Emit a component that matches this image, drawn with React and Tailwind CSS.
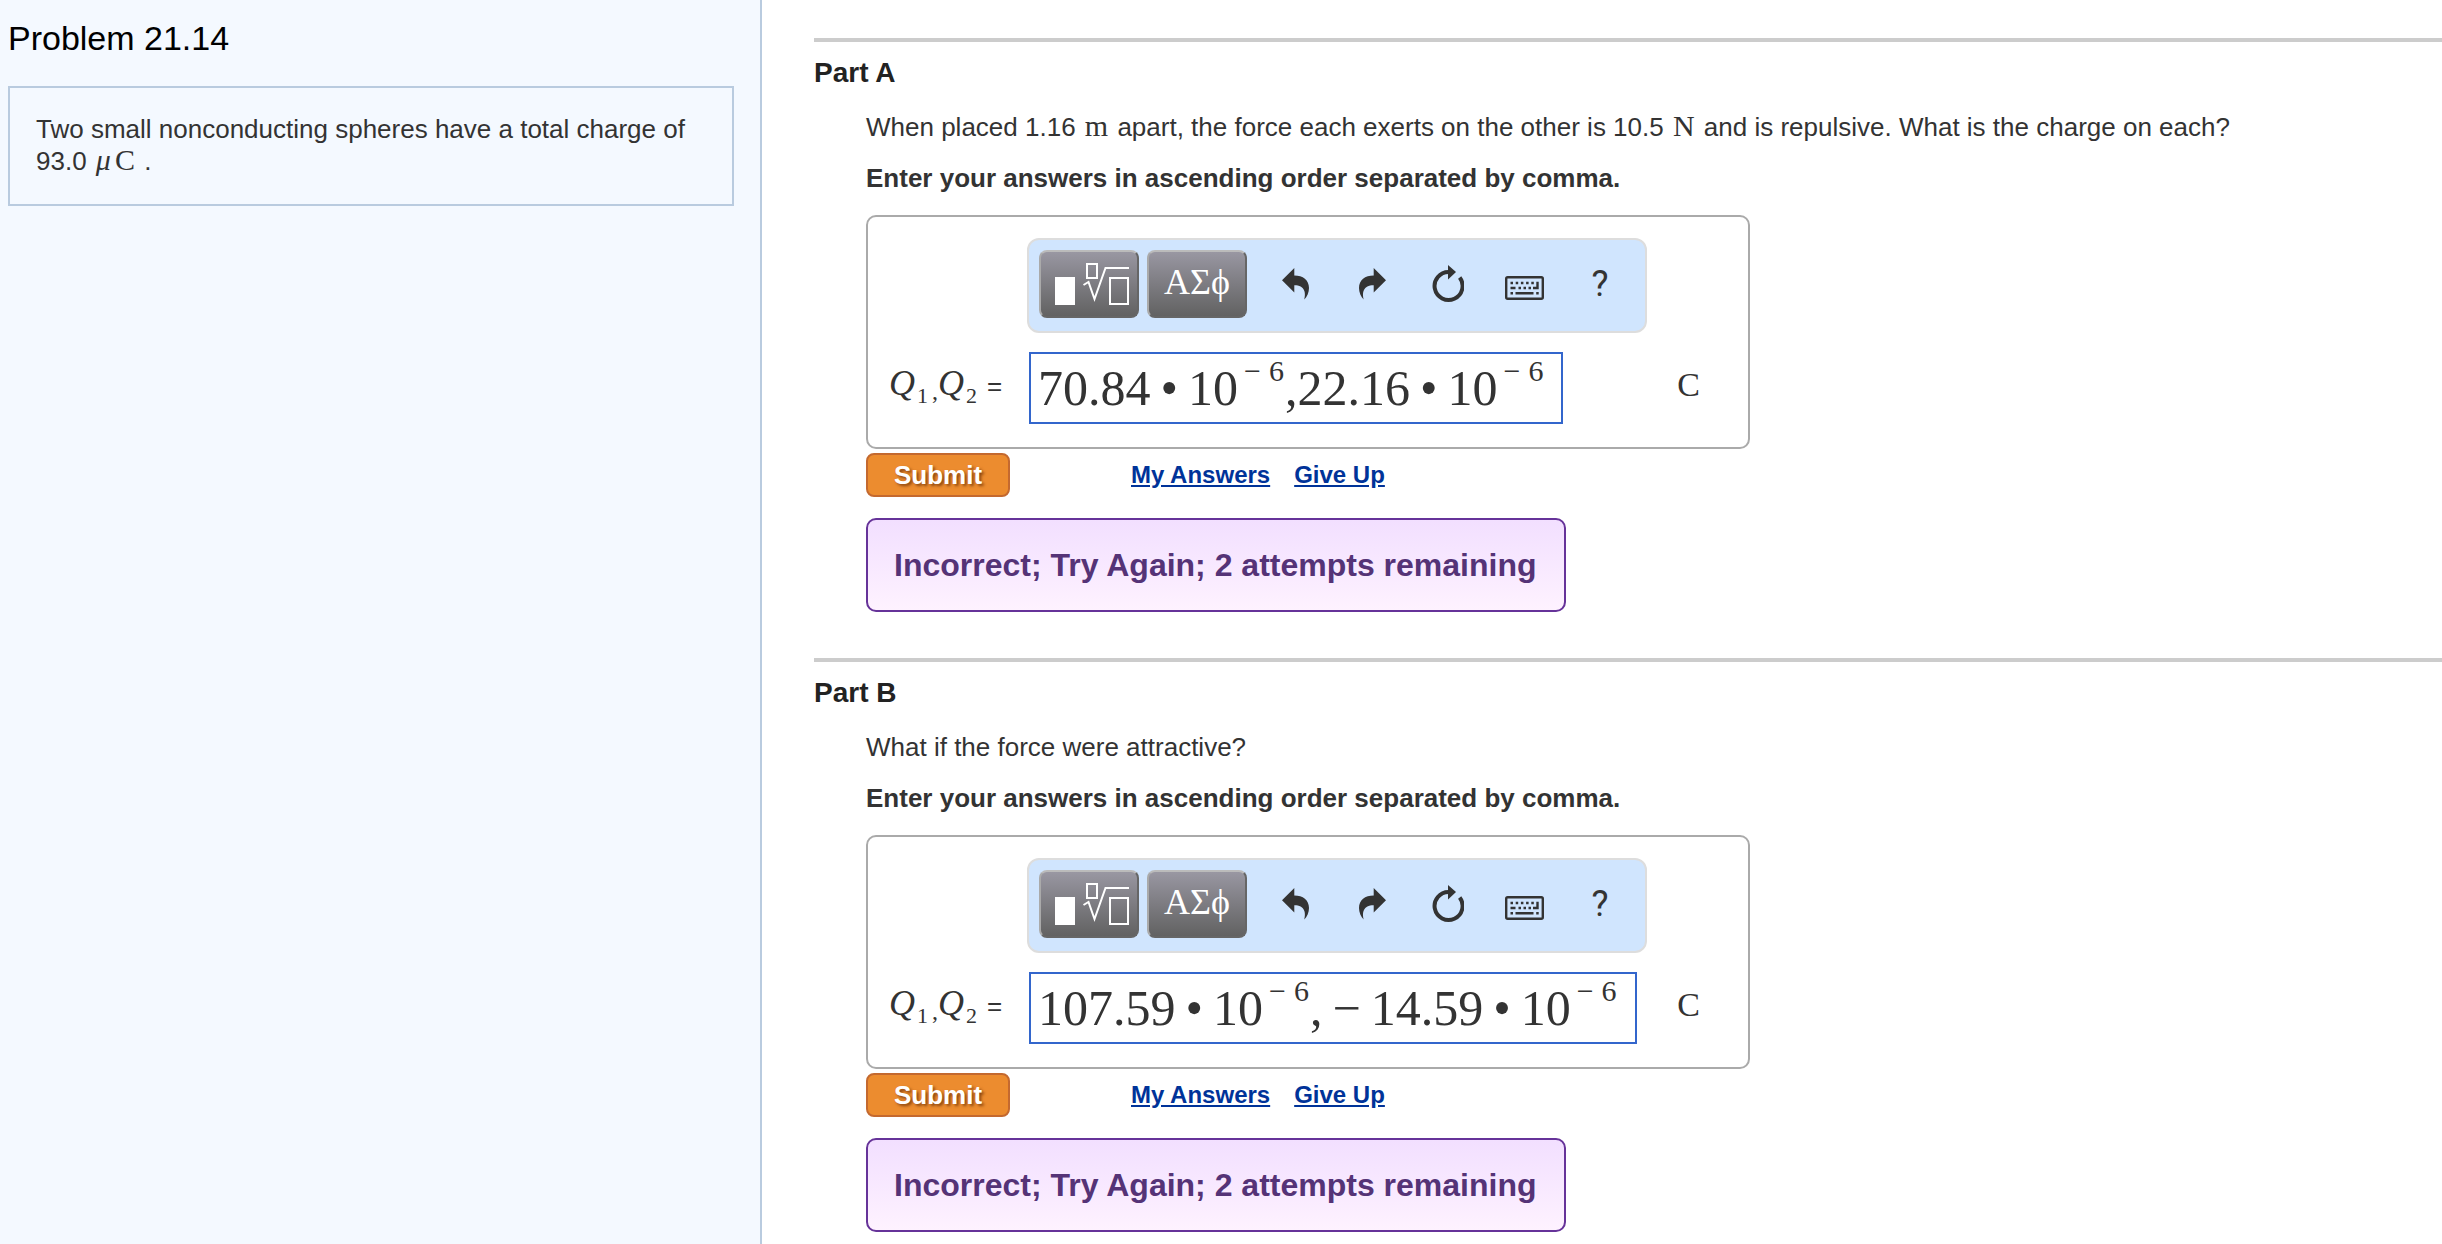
const serif = "font-['Liberation_Serif',serif]";

function Pow({ children }) {
  return (
    <sup className="relative -top-6 ml-[6px] mr-px flex gap-2 text-[30px] leading-none">
      <span>−</span>
      <span>{children}</span>
    </sup>
  );
}

function Dot() {
  return <span className="px-[10px]">•</span>;
}

function Unit({ children }) {
  return <span className={`${serif} mx-[2px] text-[30px] leading-none`}>{children}</span>;
}

function IconTemplates() {
  return (
    <svg width="76" height="44" viewBox="0 0 76 44" fill="none" stroke="#fff" strokeWidth="2">
      <rect x="1" y="15" width="20" height="28" fill="#fff" stroke="none" />
      <rect x="33" y="2" width="10" height="14" />
      <path d="M29.500 23l5 -3 6 17 11 -31h23.500" />
      <rect x="56" y="16" width="18" height="26" />
    </svg>
  );
}

function IconUndo({ flip }) {
  return (
    <svg width="28" height="32" viewBox="0 0 28 32" fill="#333" className={flip ? '-scale-x-100' : ''}>
      <path d="M0 12.300L12.300 0V7.500C21 7.500 27 12 27 20C27 24.500 25 29 22.300 31.500C24 25 23 17.300 12.300 17.300V24.500Z" />
    </svg>
  );
}

function IconReset() {
  return (
    <svg width="32" height="38" viewBox="0 0 32 38">
      <path d="M17 7A14 14 0 1 0 27.700 12.500" fill="none" stroke="#333" strokeWidth="4" />
      <path d="M16 0L24 7L16 14.500Z" fill="#333" />
    </svg>
  );
}

function IconKeyboard() {
  return (
    <svg width="39" height="24" viewBox="0 0 39 24">
      <rect x="1.200" y="1.200" width="36.600" height="21.600" rx="1.500" fill="none" stroke="#333" strokeWidth="2.400" />
      <g fill="none" stroke="#333" strokeWidth="2.400">
        <path d="M5.500 7h2.500M10.700 7h2.500M15.900 7h2.500M21.100 7h2.500M26.300 7h2.500" />
        <path d="M32.500 5.800v6.200h-4.500" />
        <path d="M5.500 12h5M13.500 12h2.500M18.500 12h2.500M23.500 12h2.500" />
        <path d="M5.500 17.200h2.500M10.500 17.200h18M31.200 17.200h2.500" />
      </g>
    </svg>
  );
}

const darkButton =
  'flex h-[68px] w-[100px] shrink-0 items-center justify-center rounded-lg border-2 border-t-[#bbb] border-l-[#aaa] border-r-[#666] border-b-[#666] bg-linear-to-b from-[#9997a2] to-[#626262] text-white';
const iconButton = 'flex h-[68px] w-[76px] shrink-0 items-center justify-center text-[#333]';

function Toolbar() {
  return (
    <div role="toolbar" className="flex h-[95px] w-[620px] items-start rounded-xl border-2 border-[#ddd] bg-[#d0e5fe] px-[10px] pt-[10px]">
      <button type="button" aria-label="Templates" className={`${darkButton} pl-[6px]`}>
        <IconTemplates />
      </button>
      <button type="button" aria-label="Symbols" className={`${darkButton} ${serif} ml-2 text-4xl`}>
        <span className="pb-1">ΑΣϕ</span>
      </button>
      <div className="ml-[11px] flex">
        <button type="button" aria-label="Undo" className={iconButton}><IconUndo /></button>
        <button type="button" aria-label="Redo" className={iconButton}><IconUndo flip /></button>
        <button type="button" aria-label="Reset" className={iconButton}><IconReset /></button>
        <button type="button" aria-label="Keyboard shortcuts" className={`${iconButton} pt-2`}><IconKeyboard /></button>
        <button type="button" aria-label="Help" className={`${iconButton} font-[Roboto,sans-serif] text-4xl`}>?</button>
      </div>
    </div>
  );
}

function Part({ title, question, answer, answerWidth }) {
  const labelId = `${title.replace(' ', '-').toLowerCase()}-label`;

  return (
    <section className="border-t-4 border-[#ccc] pb-[46px] last:pb-3">
      <h2 className="mt-[15px] text-[28px] leading-8 font-bold text-[#222]">{title}</h2>
      <div className="ml-[52px]">
        <p className="mt-[22px] leading-8">{question}</p>
        <p className="mt-[19px] leading-8 font-bold">Enter your answers in ascending order separated by comma.</p>

        <div className="mt-[21px] w-[884px] rounded-[10px] border-2 border-[#aaa] pt-[21px] pb-[23px]">
          <div className="ml-[159px]">
            <Toolbar />
          </div>
          <div className="mt-[19px] flex h-[72px] items-center">
            <div id={labelId} className={`${serif} flex w-[161px] items-baseline pb-2 pl-[21px] text-4xl leading-none`}>
              <i>Q</i>
              <sub className="relative top-2 bottom-auto ml-[2px] text-[22px]">1</sub>
              <span className="relative top-1 ml-1 text-2xl">,</span>
              <i>Q</i>
              <sub className="relative top-2 bottom-auto ml-[2px] text-[22px]">2</sub>
              <span className="ml-[10px] font-['Liberation_Sans',sans-serif] text-[26px]">=</span>
            </div>
            <div
              role="textbox"
              aria-labelledby={labelId}
              contentEditable
              suppressContentEditableWarning
              className={`${serif} ${answerWidth} flex h-[72px] items-baseline border-2 border-[#36c] bg-white pt-[9px] pl-[7px] text-[50px] leading-none outline-none`}
            >
              {answer}
            </div>
            <span className={`${serif} ml-auto pr-[48px] pb-[6px] text-[34px] leading-none`}>C</span>
          </div>
        </div>

        <div className="mt-1 flex items-center">
          <button type="button" className="h-11 w-36 rounded-lg border-2 border-[#c4692f] bg-[#ec8c2f] text-[26px] leading-none font-bold text-white [text-shadow:2px_2px_3px_#8a4510]">
            Submit
          </button>
          <div className="ml-[121px] flex gap-6 text-2xl font-bold text-[#039]">
            <a href="#answers" className="underline">My Answers</a>
            <a href="#give-up" className="underline">Give Up</a>
          </div>
        </div>

        <div className="mt-[21px] flex h-[94px] w-[700px] items-center rounded-[10px] border-2 border-[#639] bg-linear-to-b from-[#f2dfff] to-[#fef2ff] pl-[26px] text-[32px] font-bold text-[#537]">
          Incorrect; Try Again; 2 attempts remaining
        </div>
      </div>
    </section>
  );
}

export default function App() {
  return (
    <div className="flex min-h-screen bg-white font-['Liberation_Sans',sans-serif] text-[26px] text-[#333]">
      <aside className="w-[762px] shrink-0 border-r-2 border-[#b9cbdf] bg-[#f4f9ff] pr-[26px] pl-2">
        <h1 className="mt-[18px] text-[34px] leading-10 text-black">Problem 21.14</h1>
        <div className="mt-7 border-2 border-[#b9cbdf] px-[26px] pt-[25px] pb-[27px] leading-8">
          Two small nonconducting spheres have a total charge of 93.0 <Unit><i className="pr-1">μ</i>C</Unit> .
        </div>
      </aside>
      <main className="min-w-0 flex-1 pt-[38px] pl-[52px]">
        <Part
          title="Part A"
          question={<>When placed 1.16 <Unit>m</Unit> apart, the force each exerts on the other is 10.5 <Unit>N</Unit> and is repulsive. What is the charge on each?</>}
          answer={<>70.84<Dot />10<Pow>6</Pow>,22.16<Dot />10<Pow>6</Pow></>}
          answerWidth="w-[534px]"
        />
        <Part
          title="Part B"
          question="What if the force were attractive?"
          answer={<>107.59<Dot />10<Pow>6</Pow>,<span className="px-[10px]">−</span>14.59<Dot />10<Pow>6</Pow></>}
          answerWidth="w-[608px]"
        />
      </main>
    </div>
  );
}
